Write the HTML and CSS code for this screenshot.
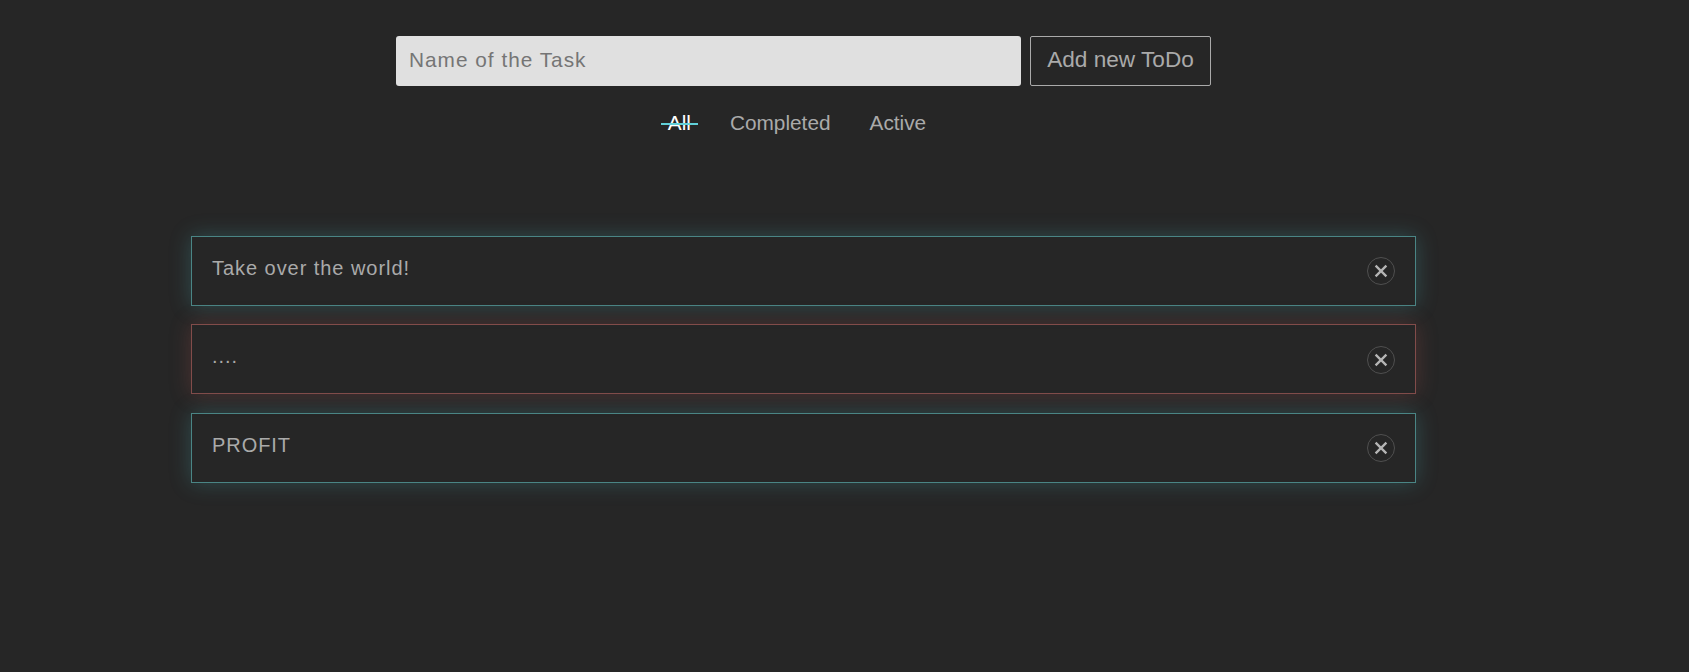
FILE: index.html
```html
<!DOCTYPE html>
<html lang="en">
<head>
  <meta charset="UTF-8">
  <title>ToDo</title>
  <link rel="stylesheet" href="styles.css">
</head>
<body>
  <div class="app">
    <form class="add-form">
      <input type="text" class="task-input" placeholder="Name of the Task">
      <button type="button" class="add-btn">Add new ToDo</button>
    </form>
    <ul class="filters">
      <li class="filter current">All</li>
      <li class="filter">Completed</li>
      <li class="filter">Active</li>
    </ul>
    <ul class="todo-list">
      <li class="todo done">
        <span class="todo-text">Take over the world!</span>
        <button type="button" class="remove">
          <svg viewBox="0 0 16 16"><path d="M2.6 2.6l10.8 10.8M13.4 2.6L2.6 13.4"/></svg>
        </button>
      </li>
      <li class="todo pending">
        <span class="todo-text">....</span>
        <button type="button" class="remove">
          <svg viewBox="0 0 16 16"><path d="M2.6 2.6l10.8 10.8M13.4 2.6L2.6 13.4"/></svg>
        </button>
      </li>
      <li class="todo done">
        <span class="todo-text">PROFIT</span>
        <button type="button" class="remove">
          <svg viewBox="0 0 16 16"><path d="M2.6 2.6l10.8 10.8M13.4 2.6L2.6 13.4"/></svg>
        </button>
      </li>
    </ul>
  </div>
</body>
</html>
```

FILE: styles.css
```css
body {
  margin: 0;
  min-height: 672px;
  background-color: #262626;
  font-family: "Liberation Sans", Arial, sans-serif;
  color: #aaaaaa;
}

.app {
  width: 1607px;
  display: flex;
  flex-direction: column;
  align-items: center;
  padding-top: 36px;
}

.add-form {
  display: flex;
  gap: 9px;
}

.task-input {
  width: 625px;
  height: 50px;
  box-sizing: border-box;
  padding: 0 13px 2px;
  border: none;
  border-radius: 3px;
  outline: none;
  background-color: #e0e0e0;
  font-family: inherit;
  font-size: 20.8px;
  letter-spacing: 1px;
}

.task-input::placeholder {
  color: #757575;
}

.add-btn {
  width: 181px;
  height: 50px;
  padding: 0 0 2px;
  border: 1px solid #aaaaaa;
  border-radius: 2px;
  background: none;
  color: #aaaaaa;
  font-family: inherit;
  font-size: 22.6px;
  cursor: pointer;
}

.filters {
  display: flex;
  gap: 33px;
  margin: 24px 13px 0 0;
  padding: 0;
  list-style: none;
  font-size: 20.8px;
  line-height: 26px;
}

.filter {
  position: relative;
  padding: 0 3px;
}

.current {
  color: #ffffff;
}

.current::after {
  content: "";
  position: absolute;
  left: -4px;
  right: -4px;
  top: 13px;
  height: 2px;
  background-color: #61d0d8;
}

.todo-list {
  width: 1225px;
  display: flex;
  flex-direction: column;
  gap: 18.5px;
  margin: 99.8px 0 0;
  padding: 0;
  list-style: none;
}

.todo {
  height: 70px;
  box-sizing: border-box;
  display: flex;
  justify-content: space-between;
  align-items: center;
  padding: 0 20px;
  font-size: 20px;
  letter-spacing: 0.95px;
}

.todo-text {
  align-self: flex-start;
  margin-top: 20px;
  line-height: 23px;
}

.done {
  border: 1px solid #4a8585;
  box-shadow: 0 0 20px rgba(74, 170, 175, 0.3);
}

.pending {
  border: 1px solid #824c4a;
  box-shadow: 0 0 20px rgba(170, 80, 75, 0.3);
}

.remove {
  width: 28px;
  height: 28px;
  box-sizing: border-box;
  display: flex;
  justify-content: center;
  align-items: center;
  margin-top: 0.8px;
  padding: 0;
  border: 1px solid #4f4f4f;
  border-radius: 50%;
  background: none;
  cursor: pointer;
}

.remove svg {
  width: 16px;
  height: 16px;
  fill: none;
  stroke: #b5b5b5;
  stroke-width: 2.3;
}
```
